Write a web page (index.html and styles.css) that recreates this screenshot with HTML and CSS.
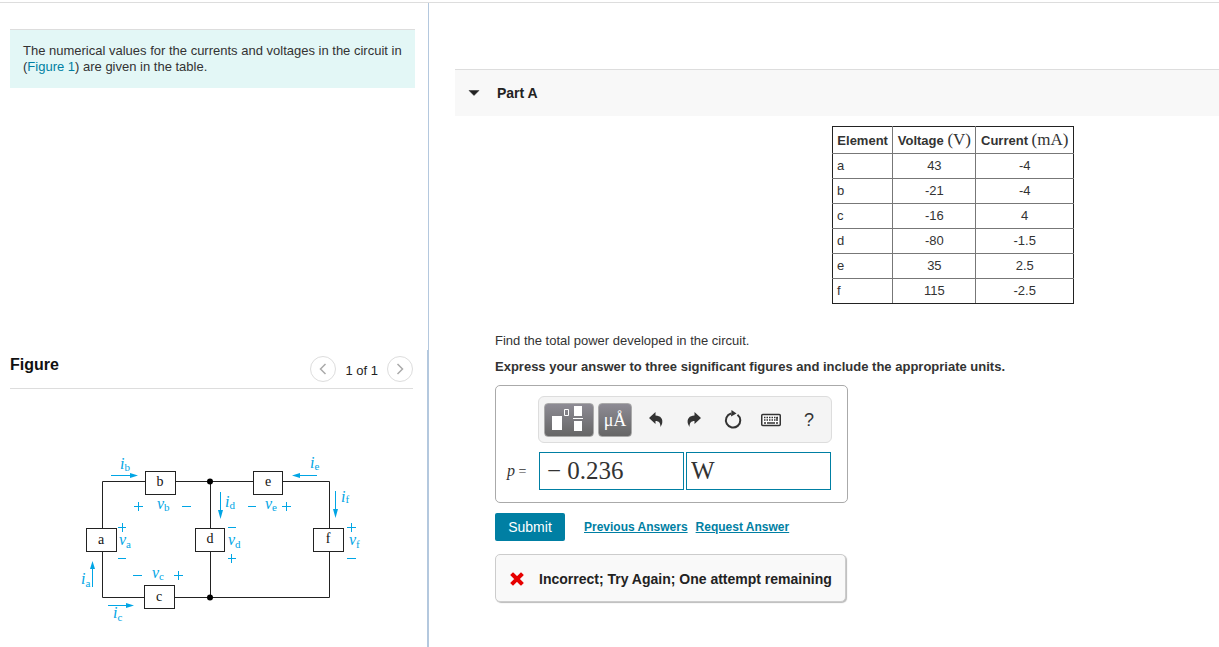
FILE: index.html
```html
<!DOCTYPE html>
<html lang="en">
<head>
<meta charset="utf-8">
<title>Circuit power</title>
<link rel="stylesheet" href="styles.css">
</head>
<body>
<div class="page">
  <aside class="side">
    <div class="intro">The numerical values for the currents and voltages in the circuit in (<a href="#figure">Figure 1</a>) are given in the table.</div>
    <section class="figure" id="figure">
      <header class="figure-head">
        <h2>Figure</h2>
        <div class="pager">
          <button class="round" type="button" aria-label="Previous figure"><svg width="24" height="24" viewBox="0 0 24 24"><path d="M14.500 7 L9.500 12 L14.500 17"/></svg></button>
          <span class="count">1 of 1</span>
          <button class="round" type="button" aria-label="Next figure"><svg width="24" height="24" viewBox="0 0 24 24"><path d="M9.500 7 L14.500 12 L9.500 17"/></svg></button>
        </div>
      </header>
      <svg class="circuit" width="300" height="180" viewBox="0 0 300 180" role="img" aria-label="Circuit with elements a to f">
        <g class="wire">
          <path d="M32.500 31.500H259.500V147.500H32.500ZM140.500 31.500V147.500"/>
          <rect x="75.500" y="21.500" width="30" height="23"/>
          <rect x="183.500" y="21.500" width="29" height="23"/>
          <rect x="16.500" y="78.500" width="30" height="23"/>
          <rect x="125.500" y="78.500" width="29" height="23"/>
          <rect x="243.500" y="78.500" width="30" height="23"/>
          <rect x="74.500" y="135.500" width="30" height="23"/>
        </g>
        <circle cx="140" cy="31.500" r="3"/><circle cx="140" cy="147.500" r="3"/>
        <g class="name">
          <text x="90" y="36">b</text><text x="198" y="36">e</text><text x="31" y="94">a</text>
          <text x="140" y="93">d</text><text x="258" y="93">f</text><text x="89" y="151">c</text>
        </g>
        <path class="arrow" d="M41 25.500H62M38 155.500H58M22.500 137V117M150.500 42V62M247 25.500H228M265.500 41V60" transform="translate(0 0)"/>
        <path class="head" d="M60 23L68 25.500L60 28ZM56 153L64 155.500L56 158ZM20 119L22.500 111L25 119ZM148 60L150.500 69L153 60ZM222 25.500L230 23V28ZM263 59L265.500 68L268 59Z"/>
        <g class="label">
          <text x="50" y="19"><tspan class="var">i</tspan><tspan class="sub" dy="2">b</tspan></text>
          <text x="240" y="18"><tspan class="var">i</tspan><tspan class="sub" dy="2">e</tspan></text>
          <text x="155" y="57"><tspan class="var">i</tspan><tspan class="sub" dy="2">d</tspan></text>
          <text x="271" y="52"><tspan class="var">i</tspan><tspan class="sub" dy="1">f</tspan></text>
          <text x="11" y="134"><tspan class="var">i</tspan><tspan class="sub" dy="3">a</tspan></text>
          <text x="43" y="168"><tspan class="var">i</tspan><tspan class="sub" dy="3">c</tspan></text>
          <text x="87" y="59"><tspan class="var">v</tspan><tspan class="sub" dy="2">b</tspan></text>
          <text x="195" y="59"><tspan class="var">v</tspan><tspan class="sub" dy="2">e</tspan></text>
          <text x="49" y="95"><tspan class="var">v</tspan><tspan class="sub" dy="3">a</tspan></text>
          <text x="158" y="95"><tspan class="var">v</tspan><tspan class="sub" dy="3">d</tspan></text>
          <text x="279" y="95"><tspan class="var">v</tspan><tspan class="sub" dy="3">f</tspan></text>
          <text x="82" y="128"><tspan class="var">v</tspan><tspan class="sub" dy="2">c</tspan></text>
        </g>
        <path class="sign" d="M64 56.500H73M68.500 52V61M112 56.500H121M48 77.500H56M52.500 73V82M48 108.500H56M63 125.500H72M104 125.500H113M108.500 121V130M178 56.500H186M212 56.500H221M216.500 52V61M158 77.500H166M158 108.500H166M161.500 104V113M277 77.500H286M281.500 73V82M277 108.500H286"/>
      </svg>
    </section>
  </aside>
  <main class="main">
    <header class="part">
      <svg width="12" height="8" viewBox="0 0 12 8"><path d="M1 1.500H11L6 6.500Z" fill="#222" stroke="#222" stroke-width="0.500" stroke-linejoin="round"/></svg>
      <h2>Part A</h2>
    </header>
    <div class="content">
      <table class="values">
        <thead><tr><th>Element</th><th>Voltage <span class="unit">(V)</span></th><th>Current <span class="unit">(mA)</span></th></tr></thead>
        <tbody>
          <tr><td>a</td><td>43</td><td>-4</td></tr>
          <tr><td>b</td><td>-21</td><td>-4</td></tr>
          <tr><td>c</td><td>-16</td><td>4</td></tr>
          <tr><td>d</td><td>-80</td><td>-1.5</td></tr>
          <tr><td>e</td><td>35</td><td>2.5</td></tr>
          <tr><td>f</td><td>115</td><td>-2.5</td></tr>
        </tbody>
      </table>
      <p>Find the total power developed in the circuit.</p>
      <p class="strong">Express your answer to three significant figures and include the appropriate units.</p>
      <form class="answer">
        <div class="tools">
          <button class="dark wide" type="button" aria-label="Templates"><svg width="48" height="34" viewBox="0 0 48 34"><path fill="#fff" d="M7 13H17V27H7ZM29 3H37V13H29ZM28 15H38V16H28ZM29 18H37V28H29Z"/><path fill="none" stroke="#fff" d="M19.500 6.500H23.500V12.500H19.500Z"/></svg></button>
          <button class="dark" type="button">μÅ</button>
          <button class="tool" type="button" aria-label="Undo"><svg width="16" height="16" viewBox="0 0 16 16"><path d="M1 6L7.500 0V3.500C12.500 3.500 15.500 7 14 12L12.500 15C12.500 11 11 9 7.500 9V12Z"/></svg></button>
          <button class="tool" type="button" aria-label="Redo"><svg width="16" height="16" viewBox="0 0 16 16"><path d="M15 6L8.500 0V3.500C3.500 3.500 0.500 7 2 12L3.500 15C3.500 11 5 9 8.500 9V12Z"/></svg></button>
          <button class="tool" type="button" aria-label="Reset"><svg width="20" height="20" viewBox="0 0 20 20"><path d="M14.500 4.700A7.200 7.200 0 1 1 8 3.500" fill="none" stroke="#333" stroke-width="2"/><path d="M8.500 0L13.500 3.500L8 6.500Z"/></svg></button>
          <button class="tool" type="button" aria-label="Keyboard"><svg width="20" height="14" viewBox="0 0 20 14"><rect x="0.750" y="1.500" width="18.500" height="11" rx="1" fill="#fff" stroke="#333" stroke-width="1.500"/><path d="M3 4.500H17M3 7H15" stroke="#333" stroke-width="1.500" stroke-dasharray="1.500 1"/><path d="M3 10H5M6 10H14M15 10H17M16 4V8" stroke="#333" stroke-width="1.500"/></svg></button>
          <button class="tool help" type="button" aria-label="Help">?</button>
        </div>
        <label class="symbol" for="value"><i>p</i> =</label>
        <div class="fields">
          <input id="value" type="text" value="− 0.236">
          <input class="units" type="text" value="W" aria-label="Units">
        </div>
      </form>
      <div class="actions">
        <button class="submit" type="button">Submit</button>
        <a href="#previous">Previous Answers</a>
        <a href="#request">Request Answer</a>
      </div>
      <div class="feedback" role="status">
        <svg width="14" height="14" viewBox="0 0 14 14"><path d="M3 3L11 11M11 3L3 11" stroke="#e60000" stroke-width="4" stroke-linecap="square"/></svg>
        <span>Incorrect; Try Again; One attempt remaining</span>
      </div>
    </div>
  </main>
</div>
</body>
</html>
```
FILE: styles.css
```css
* { box-sizing: border-box; }
body {
  margin: 0;
  padding-top: 2px;
  color: #333;
  background: #fff;
  font: 13px/16px "Liberation Sans", Arial, sans-serif;
}
h2, p { margin: 0; }
button { padding: 0; border: 0; background: none; font: inherit; color: inherit; cursor: pointer; }
svg { display: block; }
a { color: #007fa3; }
.page { display: flex; min-height: calc(100vh - 2px); border-top: 1px solid #ddd; }
.side {
  flex: 0 0 429px;
  display: flex;
  flex-direction: column;
  border-right: 1px solid #b4c8de;
  padding-top: 26px;
}
.intro {
  margin: 0 13px 0 10px;
  padding: 13px 12px 13px 13px;
  min-height: 59px;
  border-top: 1px solid #ddd;
  background: #e3f7f6;
}
.intro a { text-decoration: none; }
.figure { flex: 1; margin-top: 262px; border-right: 1px solid #b4c8de; padding: 0 14px 0 10px; }
.figure-head {
  display: flex;
  align-items: center;
  justify-content: space-between;
  height: 39px;
  border-bottom: 1px solid #ddd;
  color: #222;
}
.figure-head h2 { padding-bottom: 8px; font-size: 16px; line-height: 20px; color: #111; }
.pager { display: flex; align-items: center; gap: 9px; }
.count { padding-top: 4px; }
.round { width: 26px; height: 26px; border: 1px solid #ddd; border-radius: 50%; }
.round path { fill: none; stroke: #aaa; stroke-width: 1.5; }
.circuit { margin: 61px 0 0 60px; font-family: "Liberation Serif", "Times New Roman", serif; }
.wire { fill: #fff; stroke: #222; }
.name { font-size: 14px; fill: #111; text-anchor: middle; }
.arrow { fill: none; stroke: #00a5e5; }
.head, .label { fill: #00a5e5; }
.var { font-size: 16px; font-style: italic; }
.sub { font-size: 11px; }
.sign { fill: none; stroke: #00a5e5; }
.main { flex: 1; min-width: 0; padding: 66px 0 0 26px; }
.part {
  display: flex;
  align-items: center;
  gap: 17px;
  height: 47px;
  padding-left: 13px;
  border-top: 1px solid #ddd;
  background: #f8f8f8;
}
.part h2 { font-size: 14px; line-height: 18px; color: #222; }
.content { padding: 10px 20px 20px 40px; }
.values { min-width: 242px; margin: 0 125px 29px auto; border-collapse: collapse; border: 1px solid #222; }
.values th, .values td { border: 1px solid #777; padding: 4px; text-align: center; }
.values th { padding-bottom: 3px; border-top-color: #222; line-height: 18px; white-space: nowrap; }
.values td { height: 25px; }
.values td:first-child { text-align: left; border-left-color: #222; }
.values th:first-child { border-left-color: #222; }
.values th:last-child, .values td:last-child { border-right-color: #222; }
.values tr:last-child td { border-bottom-color: #222; }
.unit { font: 17px/18px "Liberation Serif", serif; }
p + p { margin-top: 10px; }
.strong { font-weight: bold; }
.answer {
  display: grid;
  grid-template-columns: 31px 294px;
  row-gap: 9px;
  width: max-content;
  margin-top: 10px;
  padding: 10px 15px 12px 11px;
  border: 1px solid #aaa;
  border-radius: 5px;
}
.tools {
  grid-column: 2;
  display: flex;
  align-items: center;
  height: 47px;
  padding: 0 3px 0 5px;
  border: 1px solid #ddd;
  border-radius: 6px;
  background: #f4f4f4;
}
.dark {
  flex: 0 0 34px;
  height: 34px;
  margin-right: 5px;
  border-radius: 4px;
  border: 1px solid #aaa;
  background: linear-gradient(#8d8b94, #666);
  color: #fff;
  font: 18px/32px "Liberation Serif", serif;
}
.wide { flex-basis: 50px; margin-right: 4px; }
.wide svg { margin-top: -1px; }
.tool { flex: 1; display: grid; place-items: center; height: 34px; }
.tool svg { fill: #333; }
.help { font-size: 18px; }
.symbol { align-self: center; font: 14px/16px "Liberation Serif", serif; white-space: nowrap; }
.symbol i { font-size: 16px; }
.fields { display: grid; grid-template-columns: 1fr 1fr; gap: 2px; padding: 0 1px; }
.fields input {
  width: 100%;
  height: 38px;
  padding: 0 7px;
  border: 1px solid #007fa3;
  border-radius: 0;
  background: #fff;
  color: #333;
  font: 25px/30px "Liberation Serif", serif;
}
.fields .units { padding: 0 4px; }
.actions { display: flex; align-items: center; gap: 8px; margin-top: 10px; font-size: 12px; font-weight: bold; }
.submit {
  width: 70px;
  height: 28px;
  margin-right: 11px;
  border-radius: 2px;
  background: #007fa3;
  color: #fff;
  font-size: 14px;
  font-weight: normal;
}
.feedback {
  display: flex;
  align-items: center;
  gap: 15px;
  width: max-content;
  height: 48px;
  margin-top: 13px;
  padding: 2px 13px 0 14px;
  border: 1px solid #ccc;
  border-radius: 5px;
  background: #f9f9f9;
  box-shadow: 1px 1px 1px #bbb;
  color: #222;
  font-size: 14px;
  font-weight: bold;
}
```
